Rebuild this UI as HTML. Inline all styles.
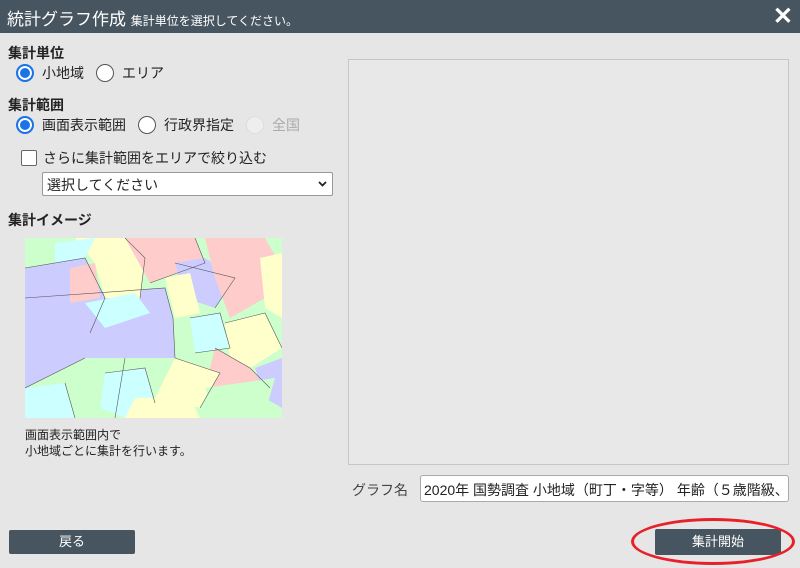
<!DOCTYPE html>
<html><head><meta charset="utf-8"><style>
*{margin:0;padding:0;box-sizing:border-box}
body{width:800px;height:568px;background:#e6e6e6;font-family:"Liberation Sans","Noto Sans CJK JP",sans-serif;color:#222;position:relative;overflow:hidden}
.hd{position:absolute;left:0;top:0;width:800px;height:33px;background:#46555f;color:#fff}
.hd .t{position:absolute;left:7px;top:5px;font-size:17px}
.hd .s{font-size:12px}
.hd .x{position:absolute;right:7px;top:2px;font-size:24px;font-weight:bold}
.a{position:absolute;white-space:nowrap}
.h{font-size:14px;font-weight:bold}
.r{display:inline-block;width:18px;height:18px;border-radius:50%;border:1px solid #555;background:#fff;vertical-align:-4px;margin-right:8px}
.r.on{border:2px solid #1a73e8;box-shadow:inset 0 0 0 2px #fff;background:#1a73e8}
.r.dis{border-color:#ddd;background:#eee}
.f{font-size:14px}
.g{display:inline-block;width:12px}
</style></head><body>
<div class="hd"><div class="t">統計グラフ作成 <span class="s">集計単位を選択してください。</span></div><div class="x">✕</div></div>
<div class="a h" style="left:8px;top:43px">集計単位</div>
<div class="a f" style="left:16px;top:63px"><span class="r on"></span>小地域<span class="g"></span><span class="r"></span>エリア</div>
<div class="a h" style="left:8px;top:95px">集計範囲</div>
<div class="a f" style="left:16px;top:115px"><span class="r on"></span>画面表示範囲<span class="g"></span><span class="r"></span>行政界指定<span class="g"></span><span class="r dis"></span><span style="color:#aaa">全国</span></div>
<div class="a f" style="left:21px;top:148px"><span style="display:inline-block;width:16px;height:16px;border:1px solid #666;background:#fff;border-radius:2px;vertical-align:-3px;margin-right:6px"></span>さらに集計範囲をエリアで絞り込む</div>
<div class="a f" style="left:42px;top:172px;width:291px;height:24px;background:#fff;border:1px solid #999;border-radius:2px;padding:2px 4px">選択してください<svg style="position:absolute;right:5px;top:8px" width="9" height="6" viewBox="0 0 9 6"><path d="M1,1 4.5,4.5 8,1" stroke="#222" stroke-width="1.8" fill="none"/></svg></div>
<div class="a h" style="left:8px;top:210px">集計イメージ</div>
<svg class="a" style="left:25px;top:238px" width="257" height="180" viewBox="0 0 257 180">
<rect width="257" height="180" fill="#ccffcc"/>
<polygon points="0,30 60,20 80,60 65,95 0,110" fill="#ccccff"/>
<polygon points="0,60 140,50 148,80 150,120 60,120 0,150" fill="#ccccff"/>
<polygon points="50,0 100,0 120,20 115,60 80,60 70,25" fill="#ffffcc"/>
<polygon points="100,0 170,0 180,25 125,45" fill="#ffcccc"/>
<polygon points="30,5 70,0 60,20 30,25" fill="#ccffff"/>
<polygon points="45,30 70,25 75,60 45,65" fill="#ffcccc"/>
<polygon points="60,65 110,55 125,75 80,90" fill="#ccffff"/>
<polygon points="150,25 180,20 210,40 190,70 160,60" fill="#ccccff"/>
<polygon points="180,0 240,0 257,30 240,60 205,80 190,40" fill="#ffcccc"/>
<polygon points="235,20 257,15 257,80 240,70" fill="#ffffcc"/>
<polygon points="140,40 165,35 175,75 150,80" fill="#ffffcc"/>
<polygon points="165,80 195,75 205,110 170,115" fill="#ccffff"/>
<polygon points="200,85 240,75 257,110 225,130 205,120" fill="#ffffcc"/>
<polygon points="190,110 225,130 245,150 200,165 180,150" fill="#ffcccc"/>
<polygon points="150,120 195,135 175,170 130,160" fill="#ffffcc"/>
<polygon points="230,130 257,120 257,170 240,160" fill="#ccccff"/>
<polygon points="80,135 120,130 130,165 100,180 75,170" fill="#ccffff"/>
<polygon points="110,160 165,160 175,180 100,180" fill="#ffffcc"/>
<polygon points="0,150 40,145 50,180 0,180" fill="#ccffff"/>
<polygon points="180,150 250,140 240,175 190,175" fill="#ccffcc"/>
<g stroke="#555" stroke-width="0.6" fill="none"><path d="M0,30 60,20 80,60 65,95 M0,60 140,50 148,80 150,120 M60,120 0,150 M100,0 120,20 115,60 M170,0 180,25 125,45 M150,25 210,40 190,70 M165,80 195,75 205,110 170,115 M200,85 240,75 257,110 M190,110 225,130 245,150 M150,120 195,135 175,170 M80,135 120,130 130,165 M40,145 50,180 M100,120 90,180"/></g>
</svg>
<div class="a" style="left:25px;top:427px;font-size:12px;line-height:16px">画面表示範囲内で<br>小地域ごとに集計を行います。</div>
<div class="a" style="left:348px;top:59px;width:441px;height:406px;border:1px solid #c6c6c6;background:#e8e8e8"></div>
<div class="a f" style="left:352px;top:480px;color:#444">グラフ名</div>
<div class="a f" style="left:420px;top:475px;width:369px;height:27px;background:#fff;border:1px solid #aaa;border-radius:3px;padding:4px 3px;overflow:hidden">2020年 国勢調査 小地域（町丁・字等） 年齢（５歳階級、</div>
<div class="a" style="left:9px;top:530px;width:126px;height:24px;background:#46555f;color:#fff;font-size:13px;text-align:center;line-height:24px;border-radius:2px">戻る</div>
<div class="a" style="left:655px;top:529px;width:126px;height:26px;background:#46555f;color:#fff;font-size:13px;text-align:center;line-height:26px;border-radius:2px">集計開始</div>
<div class="a" style="left:631px;top:518px;width:164px;height:47px;border:3px solid #e8202a;border-radius:50%"></div>
</body></html>
